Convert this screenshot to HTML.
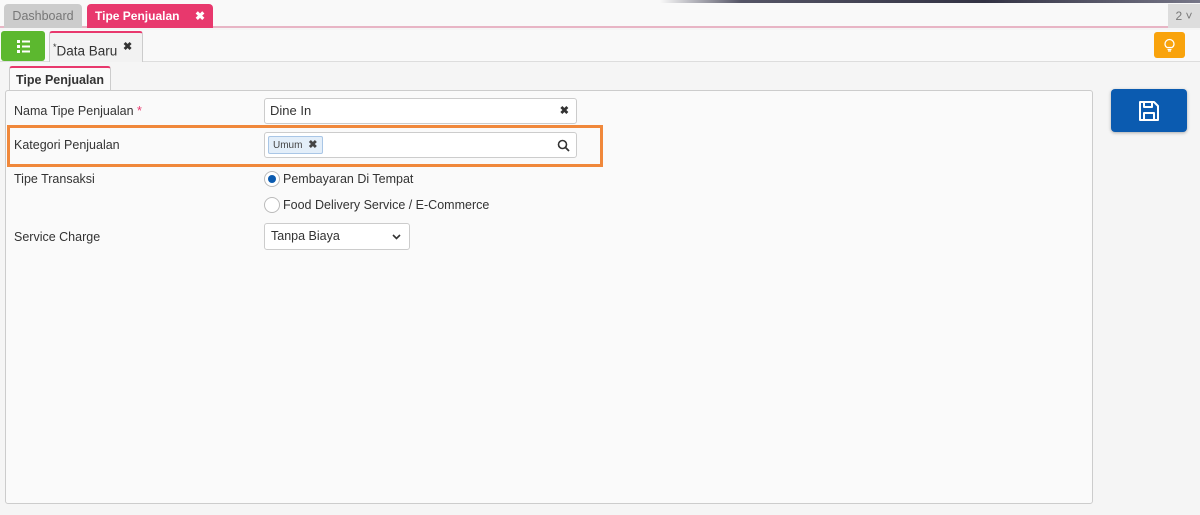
<!DOCTYPE html>
<html><head><style>
*{box-sizing:border-box;margin:0;padding:0}
body{width:1200px;height:515px;background:#f5f5f5;font-family:"Liberation Sans",sans-serif;font-size:12.5px;color:#333;position:relative;overflow:hidden}
.abs{position:absolute}
.inp{position:absolute;background:#fff;border:1px solid #ccc;border-radius:3px}
</style></head><body>
<div class="abs" style="left:0;top:0;width:1200px;height:28px;background:#f9f9f9;border-bottom:2px solid #e8b5c5"></div>
<div class="abs" style="left:660px;top:0;width:540px;height:3px;background:linear-gradient(90deg,#f9f9f9,#556 15%,#334 60%,#778)"></div>
<div class="abs" style="left:4px;top:4px;width:78px;height:24px;background:#ccc;border-radius:4px 4px 0 0;color:#777;font-size:12.5px;line-height:24px;text-align:center">Dashboard</div>
<div class="abs" style="left:87px;top:4px;width:126px;height:24px;background:#e8386d;border-radius:4px 4px 0 0;color:#fff;font-weight:bold;font-size:12px;line-height:24px;padding-left:8px;white-space:nowrap">Tipe Penjualan<span class="abs" style="right:8px;top:0">✖</span></div>
<div class="abs" style="left:1168px;top:4px;width:32px;height:24px;background:#ddd;color:#777;line-height:24px;text-align:center;font-size:12px">2 ˅</div>
<div class="abs" style="left:0;top:30px;width:1200px;height:32px;background:#f9f9f9;border-bottom:1px solid #ddd"></div>
<div class="abs" style="left:1px;top:31px;width:44px;height:30px;background:#5cb82f;border-radius:3px">
<svg width="44" height="30"><g fill="#fff"><rect x="16" y="9" width="3" height="3"/><rect x="21" y="9.5" width="8" height="2"/><rect x="16" y="14" width="3" height="3"/><rect x="21" y="14.5" width="8" height="2"/><rect x="16" y="19" width="3" height="3"/><rect x="21" y="19.5" width="8" height="2"/></g></svg></div>
<div class="abs" style="left:49px;top:31px;width:94px;height:31px;background:#f2f2f2;border:1px solid #ccc;border-top:2px solid #e8386d;border-bottom:none;border-radius:3px 3px 0 0;font-size:13.5px;line-height:28px;padding-left:3px;white-space:nowrap"><sup style="font-size:9px">*</sup>Data Baru<b class="abs" style="left:73px;top:0;font-size:11px">✖</b></div>
<div class="abs" style="left:1154px;top:32px;width:31px;height:26px;background:#f9a30c;border-radius:3px">
<svg class="abs" style="left:9px;top:6px" width="13" height="14" viewBox="0 0 13 14" fill="none" stroke="#fff" stroke-width="1.3"><path d="M4 9.5C2.5 8.5 2 7 2 6a4.5 4.5 0 0 1 9 0c0 1-.5 2.5-2 3.5z"/><path d="M4.5 11.5h4M5 13h3"/></svg></div>
<div class="abs" style="left:9px;top:66px;width:102px;height:25px;background:#fafafa;border:1px solid #ccc;border-top:2px solid #e8386d;border-bottom:none;border-radius:3px 3px 0 0;font-weight:bold;line-height:24px;text-align:center">Tipe Penjualan</div>
<div class="abs" style="left:5px;top:90px;width:1088px;height:414px;background:#fafafa;border:1px solid #ccc;border-radius:3px"></div>
<div class="abs" style="left:14px;top:104px">Nama Tipe Penjualan <span style="color:#e8386d">*</span></div>
<div class="abs" style="left:14px;top:138px">Kategori Penjualan</div>
<div class="abs" style="left:14px;top:172px">Tipe Transaksi</div>
<div class="abs" style="left:14px;top:230px">Service Charge</div>
<div class="inp" style="left:264px;top:98px;width:313px;height:26px;line-height:24px;padding-left:5px;font-size:13px">Dine In<b class="abs" style="right:7px;top:0;font-size:11px">✖</b></div>
<div class="abs" style="left:7px;top:125px;width:596px;height:42px;border:3px solid #f0883b"></div>
<div class="inp" style="left:264px;top:132px;width:313px;height:26px"><div class="abs" style="left:3px;top:3px;width:55px;height:18px;background:#e3eef9;border:1px solid #a9c6e6;border-radius:2px;font-size:10px;line-height:16px;padding-left:4px;color:#444">Umum <b style="font-size:11px;margin-left:3px">✖</b></div>
<svg class="abs" style="right:6px;top:6px" width="13" height="13"><circle cx="5.5" cy="5.5" r="4" fill="none" stroke="#333" stroke-width="1.6"/><line x1="8.5" y1="8.5" x2="12" y2="12" stroke="#333" stroke-width="1.8"/></svg></div>
<div class="abs" style="left:264px;top:171px;width:16px;height:16px;border:1px solid #bbb;border-radius:50%;background:#fff"><div style="margin:3px;width:8px;height:8px;border-radius:50%;background:#0b5bb0"></div></div>
<div class="abs" style="left:283px;top:172px">Pembayaran Di Tempat</div>
<div class="abs" style="left:264px;top:197px;width:16px;height:16px;border:1px solid #bbb;border-radius:50%;background:#fff"></div>
<div class="abs" style="left:283px;top:198px">Food Delivery Service / E-Commerce</div>
<div class="inp" style="left:264px;top:223px;width:146px;height:27px;line-height:25px;padding-left:6px">Tanpa Biaya
<svg class="abs" style="right:8px;top:10px" width="9" height="6"><path d="M1 1l3.5 3.5L8 1" fill="none" stroke="#333" stroke-width="1.6"/></svg></div>
<div class="abs" style="left:1111px;top:89px;width:76px;height:43px;background:#0b5bb0;border-radius:4px;box-shadow:0 1px 3px rgba(0,0,0,.3)">
<svg class="abs" style="left:26px;top:10px" width="24" height="24" viewBox="0 0 24 24" fill="none" stroke="#fff" stroke-width="2" stroke-linejoin="round"><path d="M3 3h14l4 4v14H3z"/><path d="M7 3v5h8V3"/><path d="M7 21v-7h10v7"/></svg></div>
</body></html>
